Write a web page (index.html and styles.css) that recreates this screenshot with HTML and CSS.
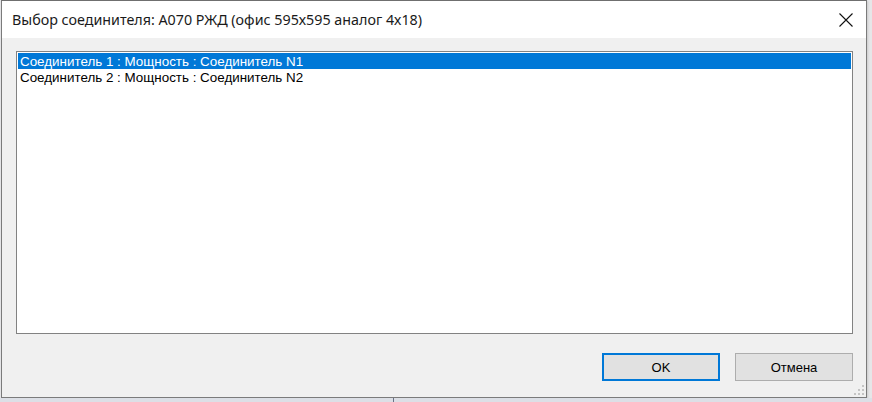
FILE: index.html
```html
<!DOCTYPE html>
<html lang="ru">
<head>
<meta charset="utf-8">
<title>Выбор соединителя</title>
<link rel="stylesheet" href="styles.css">
</head>
<body>
<div class="screen">
  <div class="window">
    <div class="titlebar">
      <span class="title">Выбор соединителя: А070 РЖД (офис 595х595 аналог 4х18)</span>
      <svg class="close" width="16" height="16" viewBox="0 0 16 16"><path d="M1.5 1.5 L14.5 14.5 M14.5 1.5 L1.5 14.5" stroke="#111" stroke-width="1.1" fill="none"/></svg>
    </div>
    <div class="client">
      <div class="listbox">
        <div class="item selected">Соединитель 1 : Мощность : Соединитель N1</div>
        <div class="item">Соединитель 2 : Мощность : Соединитель N2</div>
      </div>
      <div class="buttons">
        <button class="btn default">OK</button>
        <button class="btn">Отмена</button>
      </div>
      <svg class="grip" width="10" height="10" viewBox="0 0 10 10">
        <rect x="8" y="0" width="2" height="2" fill="#c4c4c4"/>
        <rect x="4" y="4" width="2" height="2" fill="#c4c4c4"/>
        <rect x="8" y="4" width="2" height="2" fill="#c4c4c4"/>
        <rect x="0" y="8" width="2" height="2" fill="#c4c4c4"/>
        <rect x="4" y="8" width="2" height="2" fill="#c4c4c4"/>
        <rect x="8" y="8" width="2" height="2" fill="#c4c4c4"/>
      </svg>
    </div>
  </div>
  <div class="below"><span class="bgline"></span></div>
</div>
</body>
</html>
```
FILE: styles.css
```css
html, body {
  margin: 0;
  padding: 0;
}
body {
  width: 872px;
  height: 402px;
  overflow: hidden;
  background: #e6e6e8;
  font-family: "Liberation Sans", Arial, sans-serif;
}
.screen {
  display: flex;
  flex-direction: column;
}
.window {
  margin-left: 1px;
  width: 864px;
  height: 396px;
  border: 1px solid #7b7b7b;
  border-top-color: #6f6f6f;
  background: #f0f0f0;
  display: flex;
  flex-direction: column;
  box-shadow: 1px 1px 2px rgba(0,0,0,0.12);
}
.titlebar {
  height: 37px;
  background: #ffffff;
  display: flex;
  align-items: center;
  justify-content: space-between;
  padding-left: 10px;
  padding-right: 12px;
  flex: none;
}
.title {
  font-family: "Noto Sans", "Open Sans", sans-serif;
  font-size: 14.3px;
  color: #1a1a1a;
  margin-top: 0px;
}
.close {
  margin-right: 0px;
  margin-top: 1px;
}
.client {
  position: relative;
  flex: 1;
  padding: 13px 13px 0 14px;
  display: flex;
  flex-direction: column;
}
.listbox {
  height: 280px;
  border: 1px solid #828282;
  background: #ffffff;
  padding: 1px 1px 0 1px;
  display: flex;
  flex-direction: column;
}
.item {
  height: 16px;
  line-height: 17px;
  font-size: 13.4px;
  color: #000;
  padding-left: 2px;
  white-space: nowrap;
}
.item.selected {
  background: #0078d7;
  color: #ffffff;
}
.buttons {
  margin-top: 19px;
  display: flex;
  justify-content: flex-end;
  gap: 15px;
}
.btn {
  width: 118px;
  height: 28px;
  margin: 0;
  background: #e1e1e1;
  border: 1px solid #adadad;
  font-family: "Liberation Sans", Arial, sans-serif;
  font-size: 13px;
  color: #000;
  padding: 0;
}
.btn.default {
  border: 2px solid #0078d7;
}
.grip {
  position: absolute;
  right: 2px;
  bottom: 2px;
}
.below {
  height: 4px;
  position: relative;
  background: #dcdfe6;
}
.bgline {
  position: absolute;
  left: 393px;
  top: 0;
  width: 1px;
  height: 4px;
  background: #6a7287;
}
```
